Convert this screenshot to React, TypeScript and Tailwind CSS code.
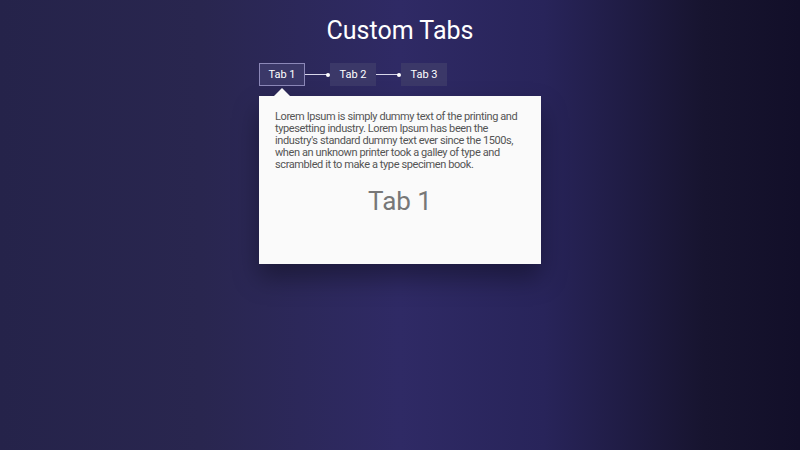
import React, { useState } from "react";

const tabs = ["Tab 1", "Tab 2", "Tab 3"];

const lorem =
  "Lorem Ipsum is simply dummy text of the printing and typesetting industry. Lorem Ipsum has been the industry's standard dummy text ever since the 1500s, when an unknown printer took a galley of type and scrambled it to make a type specimen book.";

export default function App() {
  const [active, setActive] = useState(0);

  return (
    <div
      className="w-[800px] h-[450px] overflow-hidden flex flex-col items-center bg-[linear-gradient(to_right,#25234a_0%,#29264f_25%,#2f2a65_50%,#28245a_68%,#17142f_88%,#120f29_100%)]"
      style={{ fontFamily: "Roboto, 'Liberation Sans', sans-serif" }}
    >
      <h1 className="mt-[15px] text-[25px] leading-[32px] text-white font-normal">Custom Tabs</h1>

      <div className="w-[282px] mt-[16px]">
        {/* tab strip with connectors */}
        <div className="flex items-center h-[23px]">
          {tabs.map((t, i) => (
            <React.Fragment key={t}>
              <button
                onClick={() => setActive(i)}
                className={`w-[46px] h-[23px] pt-[2px] flex items-center justify-center text-[11px] text-white bg-[#3b3868] ${
                  active === i ? "border border-[#8c88b8]" : ""
                }`}
              >
                {t}
              </button>
              {i < tabs.length - 1 && (
                <div className="w-[25px] flex items-center">
                  <div className="flex-1 h-px bg-[#d8d6ea]" />
                  <div className="w-[4px] h-[4px] rounded-full bg-white -ml-[2px]" />
                </div>
              )}
            </React.Fragment>
          ))}
        </div>

        {/* panel with pointer */}
        <div className="relative mt-[10px]">
          <div
            className="absolute -top-[8px] w-0 h-0 border-l-[8px] border-r-[8px] border-b-[8px] border-l-transparent border-r-transparent border-b-[#fafafa]"
            style={{ left: 15 + active * 71 }}
          />
          <div className="h-[168px] bg-[#fafafa] px-[16px] pt-[15px] shadow-[0_14px_24px_rgba(0,0,0,0.35)]">
            <p className="text-[11px] leading-[12px] tracking-[-0.4px] text-[#555555]">{lorem}</p>
            <div className="mt-[14px] text-center text-[26px] leading-[32px] text-[#777777]">
              {tabs[active]}
            </div>
          </div>
        </div>
      </div>
    </div>
  );
}
